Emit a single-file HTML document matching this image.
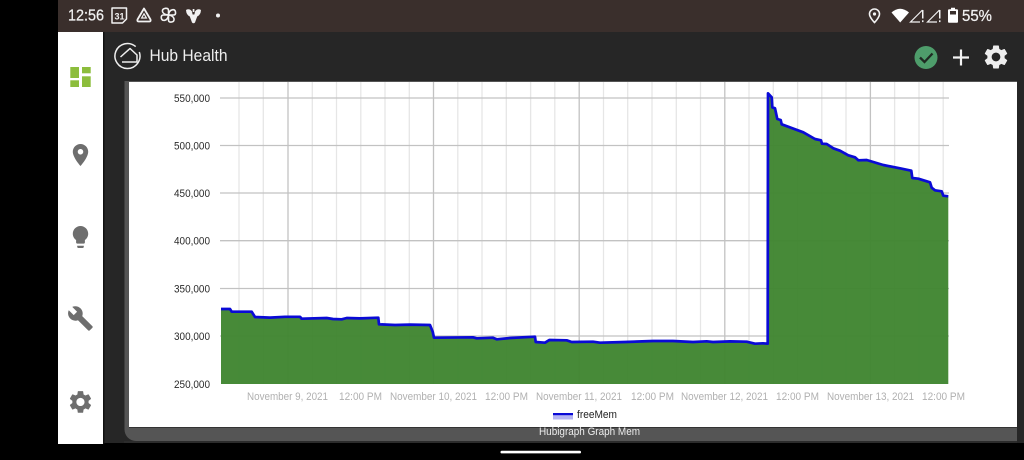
<!DOCTYPE html>
<html><head><meta charset="utf-8"><title>Hub Health</title>
<style>html,body{margin:0;padding:0;background:#000;width:1024px;height:460px;overflow:hidden}svg{display:block}text{font-family:"Liberation Sans",sans-serif}</style>
</head><body>
<svg width="1024" height="460" viewBox="0 0 1024 460" xmlns="http://www.w3.org/2000/svg">
<rect width="1024" height="460" fill="#000"/>
<rect x="58" y="0" width="966" height="32" fill="#3a2f2c"/>
<rect x="103" y="32" width="921" height="411" fill="#262626"/>
<rect x="58" y="32" width="45" height="412" fill="#fff"/>
<rect x="103" y="32" width="1.5" height="412" fill="#111"/>
<path d="M124.500 81H1017V441H136a11.500 11.500 0 0 1-11.500-11.500Z" fill="#555"/>
<rect x="129" y="82" width="888" height="345" fill="#fff"/>
<rect x="129" y="427" width="888" height="1" fill="#333"/>
<rect x="124" y="441" width="893" height="2" fill="#2c2c2c"/>
<rect x="1017" y="81" width="7" height="362" fill="#262626"/>

<!-- grid -->
<g stroke="#e6e6e6" stroke-width="1.300" fill="none">
<path d="M239 82V384M263.300 82V384M312.300 82V384M336.500 82V384M360.800 82V384M385 82V384M409.300 82V384M457.800 82V384M482 82V384M506.300 82V384M530.600 82V384M554.800 82V384M603.500 82V384M627.700 82V384M652 82V384M676.300 82V384M700.500 82V384M749 82V384M773.300 82V384M797.600 82V384M821.800 82V384M846 82V384M894.600 82V384M919 82V384M943.200 82V384"/>
</g>
<g stroke="#c2c2c2" stroke-width="1.300" fill="none">
<path d="M288 82V384M433.500 82V384M579.200 82V384M724.800 82V384M870.400 82V384"/>
<path d="M220 98H949M220 145.500H949M220 193H949M220 240.700H949M220 288.500H949M220 336H949"/>
</g>

<!-- area -->
<path d="M221 384V309H230L231.700 311.700H251.700L255 317H300L301.700 318.700L326.700 318L333 319L341.700 319.300L346.700 318L378.300 317.700L379 324.300L430 325L432.700 331.700L434 337.700L473 337.300L476.700 338.300L493 337.700L496.700 339.300L510 338L535 336.700L535.700 342L545 342.700L549.300 340L566.700 340.300L571.700 342L593 341.700L600 342.700L653 341L673 341L693 342L706.700 341.300L713 342L746.700 341.700L755 343.700L763 343.300L767.700 343.700L768 93.300L771.700 97.300L772.300 107.300L775 108.300L777.300 119L780.700 120L781.700 124.300L803.300 132.300L815 139L821 140.300L822 143.700L826.700 144L833.300 148.300L840 150.700L848.300 155.300L855 157.300L858.300 160.300L866.700 160L883.300 165L900 168.300L911.300 170.700L912.300 178L918.300 178.700L930 182.300L931.700 187.700L935 190.300L941.700 191.300L943.300 195.700L948.300 196.300V384Z" fill="#3f8530" fill-opacity=".96"/>
<path d="M221 309H230L231.700 311.700H251.700L255 317L270 317.600L285 316.800H300L301.700 318.700L326.700 318L333 319L341.700 319.300L346.700 318L360 318.400L378.300 317.700L379 324.300L395 325L410 324.600L430 325L432.700 331.700L434 337.700L473 337.300L476.700 338.300L493 337.700L496.700 339.300L510 338L535 336.700L535.700 342L545 342.700L549.300 340L566.700 340.300L571.700 342L593 341.700L600 342.700L625 342L653 341L673 341L693 342L706.700 341.300L713 342L730 341.400L746.700 341.700L755 343.700L763 343.300L767.700 343.700L768 93.300L771.700 97.300L772.300 107.300L775 108.300L777.300 119L780.700 120L781.700 124.300L803.300 132.300L815 139L821 140.300L822 143.700L826.700 144L833.300 148.300L840 150.700L848.300 155.300L855 157.300L858.300 160.300L866.700 160L883.300 165L900 168.300L911.300 170.700L912.300 178L918.300 178.700L930 182.300L931.700 187.700L935 190.300L941.700 191.300L943.300 195.700L948.300 196.300" fill="none" stroke="#0a0ad6" stroke-width="2.700" stroke-linejoin="round"/>

<!-- y labels -->
<g font-size="11" fill="#2a2a2a" text-anchor="end">
<text x="210" y="102" textLength="36" lengthAdjust="spacingAndGlyphs">550,000</text>
<text x="210" y="149.500" textLength="36" lengthAdjust="spacingAndGlyphs">500,000</text>
<text x="210" y="197" textLength="36" lengthAdjust="spacingAndGlyphs">450,000</text>
<text x="210" y="244.500" textLength="36" lengthAdjust="spacingAndGlyphs">400,000</text>
<text x="210" y="292.500" textLength="36" lengthAdjust="spacingAndGlyphs">350,000</text>
<text x="210" y="340" textLength="36" lengthAdjust="spacingAndGlyphs">300,000</text>
<text x="210" y="388" textLength="36" lengthAdjust="spacingAndGlyphs">250,000</text>
</g>
<!-- x labels -->
<g font-size="11" fill="#b0b0b0">
<text x="247" y="400" textLength="81" lengthAdjust="spacingAndGlyphs">November 9, 2021</text>
<text x="339" y="400" textLength="43" lengthAdjust="spacingAndGlyphs">12:00 PM</text>
<text x="390" y="400" textLength="87" lengthAdjust="spacingAndGlyphs">November 10, 2021</text>
<text x="485" y="400" textLength="43" lengthAdjust="spacingAndGlyphs">12:00 PM</text>
<text x="536" y="400" textLength="86" lengthAdjust="spacingAndGlyphs">November 11, 2021</text>
<text x="631" y="400" textLength="43" lengthAdjust="spacingAndGlyphs">12:00 PM</text>
<text x="681" y="400" textLength="87" lengthAdjust="spacingAndGlyphs">November 12, 2021</text>
<text x="776" y="400" textLength="43" lengthAdjust="spacingAndGlyphs">12:00 PM</text>
<text x="827" y="400" textLength="87" lengthAdjust="spacingAndGlyphs">November 13, 2021</text>
<text x="922" y="400" textLength="43" lengthAdjust="spacingAndGlyphs">12:00 PM</text>
</g>
<!-- legend -->
<rect x="553" y="415" width="20" height="4.500" fill="#b4b4f2"/>
<rect x="553" y="413" width="20" height="2.200" fill="#0a0ad6"/>
<text x="577" y="418" font-size="11" fill="#222" textLength="40" lengthAdjust="spacingAndGlyphs">freeMem</text>
<text x="539" y="435" font-size="11" fill="#eee" textLength="101" lengthAdjust="spacingAndGlyphs">Hubigraph Graph Mem</text>

<!-- status bar -->
<text x="68" y="20.500" font-size="15.500" fill="#f2f2f2" stroke="#f2f2f2" stroke-width=".25" textLength="36" lengthAdjust="spacingAndGlyphs">12:56</text>
<path d="M112 8H126.500V19L122.500 23H112Z" fill="none" stroke="#f2f2f2" stroke-width="1.500" stroke-linejoin="round"/>
<text x="114.500" y="19.500" font-size="9.500" font-weight="bold" fill="#f2f2f2" textLength="10" lengthAdjust="spacingAndGlyphs">31</text>
<path d="M144 8.500L150.500 19.500Q151 21.500 149.500 21.500H138.500Q137 21.500 137.500 19.500Z" fill="none" stroke="#f2f2f2" stroke-width="1.800" stroke-linejoin="round"/>
<path d="M144 13.800L146.400 18H141.600Z" fill="none" stroke="#f2f2f2" stroke-width="1.200"/>
<g fill="none" stroke="#f2f2f2" stroke-width="1.600" stroke-linejoin="round">
<path d="M168.500 15V10.500Q168.500 8 165.500 8.300Q162 8.800 162.500 11.500Q163.200 14.500 168.500 15Z"/>
<path d="M168.500 15H173.500Q176 15 175.500 12Q175 9.300 172.300 9.800Q169 10.500 168.500 15Z"/>
<path d="M168.500 15V20Q168.500 22.500 171.500 22Q174.500 21.500 174 18.800Q173.300 15.700 168.500 15Z"/>
<path d="M168.500 15H163.500Q161 15 161.300 18Q161.800 20.800 164.700 20.300Q168 19.500 168.500 15Z"/>
</g>
<path d="M186 10Q189.500 8 192 11.500L192.600 14.500H194.400L195 11.500Q197.500 8 201 10Q200.700 15 197.200 16.500L195 22.500Q193.500 24 192 22.500L189.800 16.500Q186.300 15 186 10Z" fill="#f2f2f2"/>
<rect x="192.700" y="9" width="1.700" height="3" fill="#f2f2f2"/>
<circle cx="218" cy="15.500" r="2" fill="#f2f2f2"/>

<path d="M874.500 9a5 5 0 0 1 5 5c0 3.500-5 8.500-5 8.500s-5-5-5-8.500a5 5 0 0 1 5-5Z" fill="none" stroke="#f2f2f2" stroke-width="1.600"/>
<circle cx="874.500" cy="14" r="1.600" fill="#f2f2f2"/>
<path d="M891.500 12.500Q900 5 909 12.500L900.200 22.500Z" fill="#fff"/>
<path d="M922.500 10L910.500 22H920" fill="none" stroke="#f2f2f2" stroke-width="1.200"/>
<path d="M939.500 10L927.500 22H937" fill="none" stroke="#f2f2f2" stroke-width="1.200"/>
<rect x="922" y="10" width="1.500" height="8.500" fill="#f2f2f2"/>
<rect x="922" y="20.300" width="1.500" height="1.800" fill="#f2f2f2"/>
<rect x="939" y="10" width="1.500" height="8.500" fill="#f2f2f2"/>
<rect x="939" y="20.300" width="1.500" height="1.800" fill="#f2f2f2"/>
<path d="M948 10.500Q948 9.300 949.300 9.300H951V7.800H955V9.300H956.700Q958 9.300 958 10.500V21.500Q958 22.800 956.700 22.800H949.300Q948 22.800 948 21.500Z" fill="#fff"/>
<rect x="950" y="11" width="6" height="3.500" fill="#3a2f2c"/>
<text x="962" y="21" font-size="15.500" fill="#f2f2f2" stroke="#f2f2f2" stroke-width=".25" textLength="30" lengthAdjust="spacingAndGlyphs">55%</text>

<!-- header -->
<path d="M139.300 52A12.500 12.500 0 1 1 135.700 46.600" fill="none" stroke="#eee" stroke-width="1.500"/>
<path d="M120.500 57L130 48.500L137 55V62H122" fill="none" stroke="#eee" stroke-width="1.500" stroke-linejoin="round"/>
<text x="149.500" y="61" font-size="17" fill="#eee" textLength="78" lengthAdjust="spacingAndGlyphs">Hub Health</text>
<circle cx="926" cy="57.500" r="11.500" fill="#4e9d6b"/>
<path d="M920 57.500L924.500 62L932.500 53.500" fill="none" stroke="#1f2a22" stroke-width="2.300"/>
<path d="M953 57.500H969M961 49.500V65.500" stroke="#f4f4f4" stroke-width="2.200" fill="none"/>
<path transform="translate(981.600 42.600) scale(1.200)" fill="#eee" fill-rule="evenodd" d="M19.140 12.940c.04-.3.06-.61.06-.94 0-.32-.02-.64-.07-.94l2.030-1.580c.18-.14.23-.41.12-.61l-1.920-3.320c-.12-.22-.37-.29-.59-.22l-2.390.96c-.5-.38-1.030-.7-1.620-.94l-.36-2.540c-.04-.24-.24-.41-.48-.41h-3.840c-.24 0-.43.17-.47.41l-.36 2.540c-.59.24-1.130.57-1.620.94l-2.390-.96c-.22-.08-.47 0-.59.22L2.740 8.870c-.12.21-.08.47.12.61l2.030 1.580c-.05.3-.09.63-.09.94s.02.64.07.94l-2.030 1.580c-.18.14-.23.41-.12.61l1.920 3.320c.12.22.37.29.59.22l2.390-.96c.5.38 1.030.7 1.620.94l.36 2.540c.05.24.24.41.48.41h3.840c.24 0 .44-.17.47-.41l.36-2.540c.59-.24 1.130-.56 1.620-.94l2.390.96c.22.08.47 0 .59-.22l1.920-3.320c.12-.22.07-.47-.12-.61l-2.010-1.580zM12 15.600c-1.980 0-3.600-1.620-3.600-3.600s1.620-3.600 3.600-3.600 3.600 1.620 3.600 3.600-1.620 3.600-3.600 3.600z"/>

<!-- sidebar icons -->
<g fill="#8cbd3c">
<rect x="70.300" y="67" width="8.700" height="11"/>
<rect x="82" y="67" width="8.700" height="6.300"/>
<rect x="70.300" y="80.300" width="8.700" height="6.700"/>
<rect x="82" y="76.300" width="8.700" height="10.700"/>
</g>
<g fill="#6e6e6e" fill-rule="evenodd">
<path transform="translate(67.300 141.800) scale(1.100)" d="M12 2C8.130 2 5 5.130 5 9c0 5.250 7 13 7 13s7-7.750 7-13c0-3.870-3.130-7-7-7zm0 9.500c-1.380 0-2.500-1.120-2.500-2.500s1.120-2.500 2.500-2.500 2.500 1.120 2.500 2.500-1.120 2.500-2.500 2.500z"/>
<path transform="translate(67.300 223.800) scale(1.100)" d="M9 21c0 .55.45 1 1 1h4c.55 0 1-.45 1-1v-1H9v1zm3-19C8.140 2 5 5.140 5 9c0 2.380 1.190 4.470 3 5.740V17c0 .55.45 1 1 1h6c.55 0 1-.45 1-1v-2.260c1.810-1.270 3-3.360 3-5.740 0-3.860-3.140-7-7-7z"/>
<path transform="translate(67 305) scale(1.120)" d="M22.700 19l-9.100-9.100c.9-2.300.4-5-1.500-6.900-2-2-5-2.400-7.400-1.300L9 6 6 9 1.600 4.700C.4 7.100.9 10.100 2.900 12.100c1.900 1.900 4.600 2.400 6.900 1.500l9.100 9.100c.4.4 1 .4 1.400 0l2.300-2.300c.5-.4.500-1.100.1-1.400z"/>
<path transform="translate(66.900 388.400) scale(1.130)" d="M19.140 12.940c.04-.3.06-.61.06-.94 0-.32-.02-.64-.07-.94l2.030-1.580c.18-.14.23-.41.12-.61l-1.920-3.320c-.12-.22-.37-.29-.59-.22l-2.390.96c-.5-.38-1.030-.7-1.620-.94l-.36-2.540c-.04-.24-.24-.41-.48-.41h-3.840c-.24 0-.43.17-.47.41l-.36 2.540c-.59.24-1.130.57-1.620.94l-2.390-.96c-.22-.08-.47 0-.59.22L2.740 8.870c-.12.21-.08.47.12.61l2.030 1.580c-.05.3-.09.63-.09.94s.02.64.07.94l-2.030 1.580c-.18.14-.23.41-.12.61l1.920 3.320c.12.22.37.29.59.22l2.390-.96c.5.38 1.030.7 1.620.94l.36 2.540c.05.24.24.41.48.41h3.840c.24 0 .44-.17.47-.41l.36-2.540c.59-.24 1.130-.56 1.620-.94l2.390.96c.22.08.47 0 .59-.22l1.920-3.320c.12-.22.07-.47-.12-.61l-2.010-1.580zM12 15.600c-1.980 0-3.600-1.620-3.600-3.600s1.620-3.600 3.600-3.600 3.600 1.620 3.600 3.600-1.620 3.600-3.600 3.600z"/>
</g>
<!-- nav pill -->
<rect x="500.500" y="450.800" width="80.500" height="2.600" rx="1.300" fill="#fff"/>
</svg>
</body></html>
